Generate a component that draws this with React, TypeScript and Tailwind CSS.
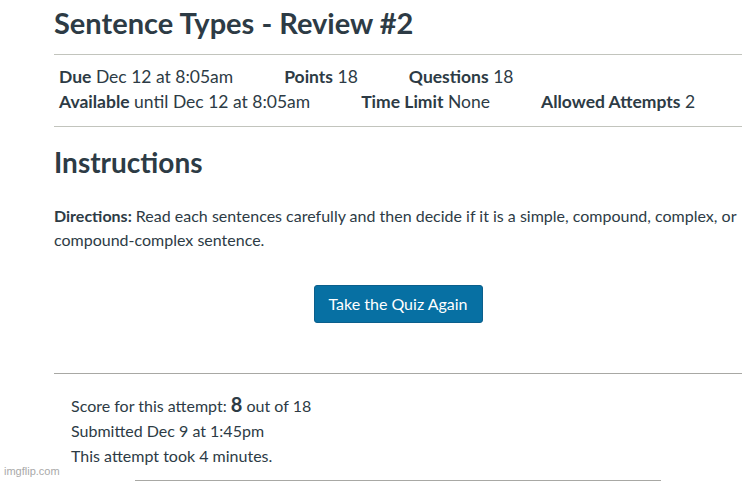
export default function App() {
  const row1 = [
    { label: "Due", value: "Dec 12 at 8:05am" },
    { label: "Points", value: "18" },
    { label: "Questions", value: "18" },
  ];
  const row2 = [
    { label: "Available", value: "until Dec 12 at 8:05am" },
    { label: "Time Limit", value: "None" },
    { label: "Allowed Attempts", value: "2" },
  ];

  return (
    <div
      className="relative h-[481px] w-[751px] overflow-hidden bg-white text-[#2d3b45]"
      style={{ fontFamily: "Lato, 'Noto Sans', sans-serif" }}
    >
      <div className="pl-[54px] pr-[9px]">
        <h1 className="border-b border-[#c2c4bd] pt-[5px] pb-[13px] text-[29px] font-bold leading-[36px]">
          Sentence Types - Review #2
        </h1>

        <div className="border-b border-[#c2c4bd] pt-[9px] pb-[12px] pl-[5px] text-[17.5px] leading-[25px]">
          <div className="flex gap-x-[51px]">
            {row1.map((d) => (
              <div key={d.label}>
                <span className="font-bold">{d.label}</span> {d.value}
              </div>
            ))}
          </div>
          <div className="flex gap-x-[51px]">
            {row2.map((d) => (
              <div key={d.label}>
                <span className="font-bold">{d.label}</span> {d.value}
              </div>
            ))}
          </div>
        </div>

        <h2 className="mt-[17px] text-[28px] font-bold leading-[36px]">Instructions</h2>

        <p className="mt-[24px] text-[16px] leading-[24px]">
          <span className="font-bold">Directions:</span> Read each sentences carefully and then decide if it is a
          simple, compound, complex, or compound-complex sentence.
        </p>

        <div className="mt-[33px] flex justify-center">
          <button className="h-[38px] w-[169px] rounded-[3px] border border-[#0b5f8c] bg-[#0770a3] text-[16px] text-white">
            Take the Quiz Again
          </button>
        </div>

        <div className="mt-[50px] border-t border-[#a8a8a4] pt-[18px] pl-[17px] text-[16px] leading-[25px]">
          <div>
            Score for this attempt: <span className="text-[20px] font-bold">8</span> out of 18
          </div>
          <div>Submitted Dec 9 at 1:45pm</div>
          <div>This attempt took 4 minutes.</div>
        </div>

        <div className="mx-auto mt-[12px] w-[526px] border-t border-[#a8a8a4]" />
      </div>

      <div
        className="absolute bottom-[4px] left-[4px] text-[11px] leading-[12px] text-[#a9a9a9]"
        style={{ fontFamily: "'Liberation Sans', Arial, sans-serif" }}
      >
        imgflip.com
      </div>
    </div>
  );
}
